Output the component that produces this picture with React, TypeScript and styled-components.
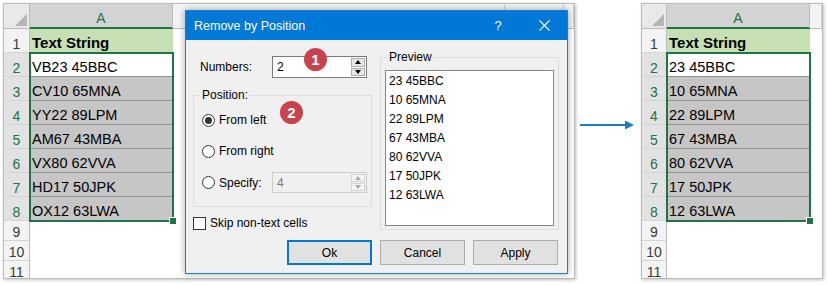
import React from "react";
import styled, { createGlobalStyle } from "styled-components";

/* tokens ---------------------------------------------------------- */
const GREEN = "#217346";
const HEAD_H = 25;
const ROW_H = 24;
const SEL_FILL = "#c6c6c6";

const GlobalStyle = createGlobalStyle`
  html, body { margin: 0; padding: 0; background: #fff; }
  body { font-family: "Liberation Sans", Arial, sans-serif; }
`;

/* page ------------------------------------------------------------ */
const Page = styled.div`
  width: 828px;
  height: 285px;
  box-sizing: border-box;
  padding: 3px 0 0 3px;
  display: flex;
  align-items: flex-start;
  overflow: hidden;
`;

const LeftPane = styled.div`
  position: relative;
  flex: none;
  width: 572px;
`;

const ArrowBox = styled.div`
  flex: none;
  width: 66px;
  padding-top: 116px;
  display: flex;
`;

/* spreadsheet ----------------------------------------------------- */
const Sheet = styled.div<{ $cols: string; $w: number }>`
  position: relative;
  flex: none;
  width: ${(p) => p.$w}px;
  height: 276px;
  box-sizing: border-box;
  border: 1px solid #bcbcbc;
  box-shadow: 1px 1px 3px rgba(0, 0, 0, 0.25);
  background: #fff;
  overflow: hidden;
  display: grid;
  grid-template-columns: ${(p) => p.$cols};
  grid-template-rows: ${HEAD_H}px repeat(8, ${ROW_H}px) repeat(3, 20px);
  align-content: start;
`;

const Corner = styled.div`
  background: #e9e9e9;
  border-right: 1px solid #bcbcbc;
  border-bottom: 1px solid #bcbcbc;
  display: flex;
  justify-content: flex-end;
  align-items: flex-end;
  padding: 0 2px 2px 0;
`;

const CornerMark = styled.div`
  width: 12px;
  height: 12px;
  background: #b5b5b5;
  clip-path: polygon(100% 0, 100% 100%, 0 100%);
`;

const ColHead = styled.div<{ $active?: boolean }>`
  background: ${(p) => (p.$active ? "#d3d3d3" : "#f3f3f3")};
  color: ${(p) => (p.$active ? GREEN : "#444")};
  border-right: 1px solid #bcbcbc;
  border-bottom: ${(p) => (p.$active ? `2px solid ${GREEN}` : "1px solid #bcbcbc")};
  font-size: 14px;
  display: flex;
  justify-content: center;
  align-items: flex-end;
  padding-bottom: 1px;
`;

const RowHead = styled.div<{ $active?: boolean }>`
  background: ${(p) => (p.$active ? "#e2e2e2" : "#f3f3f3")};
  color: ${(p) => (p.$active ? GREEN : "#3b3b3b")};
  border-right: 1px solid #bcbcbc;
  border-bottom: 1px solid #d4d4d4;
  font-size: 14px;
  display: flex;
  justify-content: center;
  align-items: flex-end;
  padding-bottom: 0;
`;

const Cell = styled.div<{ $fill?: string; $bold?: boolean; $line?: boolean }>`
  background: ${(p) => p.$fill ?? "#fff"};
  border-bottom: 1px solid ${(p) => (p.$line ? "#909090" : "transparent")};
  font-size: ${(p) => (p.$bold ? "15px" : "14.5px")};
  font-weight: ${(p) => (p.$bold ? 700 : 400)};
  color: #000;
  white-space: nowrap;
  overflow: hidden;
  display: flex;
  align-items: flex-end;
  padding: 0 0 1px 2px;
`;

const Blank = styled.div<{ $head?: boolean }>`
  background: ${(p) => (p.$head ? "#f3f3f3" : "#fff")};
  border-right: ${(p) => (p.$head ? "1px solid #d0d0d0" : "none")};
  border-bottom: ${(p) => (p.$head ? "1px solid #bcbcbc" : "none")};
`;

const Selection = styled.div<{ $left: number; $w: number }>`
  position: absolute;
  left: ${(p) => p.$left}px;
  top: ${HEAD_H + ROW_H - 1}px;
  width: ${(p) => p.$w}px;
  height: ${7 * ROW_H + 2}px;
  box-sizing: border-box;
  border: 2px solid ${GREEN};
  pointer-events: none;
`;

const FillHandle = styled.div`
  position: absolute;
  right: -5px;
  bottom: -5px;
  width: 6px;
  height: 6px;
  background: ${GREEN};
  border: 1px solid #fff;
`;

type SheetProps = { rows: string[]; cols: number[]; w: number };

function ExcelSheet({ rows, cols, w }: SheetProps) {
  const extra = cols.slice(2);
  const template = cols.map((c) => (c ? `${c}px` : "1fr")).join(" ");
  const total = 11;
  return (
    <Sheet $cols={template} $w={w}>
      <Corner>
        <CornerMark />
      </Corner>
      <ColHead $active>A</ColHead>
      {extra.map((_, i) => (
        <Blank key={`h${i}`} $head />
      ))}
      {Array.from({ length: total }, (_, r) => {
        const n = r + 1;
        const text = rows[r] ?? "";
        const sel = n >= 2 && n <= 8;
        return (
          <React.Fragment key={n}>
            <RowHead $active={sel}>{n}</RowHead>
            <Cell
              $bold={n === 1}
              $fill={n === 1 ? "#c6e0b4" : n >= 3 && n <= 8 ? SEL_FILL : "#fff"}
              $line={n >= 2 && n <= 7}
            >
              {text}
            </Cell>
            {extra.map((_, i) => (
              <Blank key={`c${n}-${i}`} />
            ))}
          </React.Fragment>
        );
      })}
      <Selection $left={cols[0] - 1} $w={cols[1] + 2}>
        <FillHandle />
      </Selection>
    </Sheet>
  );
}

/* dialog ---------------------------------------------------------- */
const Dialog = styled.div`
  position: absolute;
  left: 182px;
  top: 7px;
  width: 383px;
  height: 264px;
  box-sizing: border-box;
  border: 1px solid #1c7cd5;
  background: #f0f0f0;
  box-shadow: 0 0 7px rgba(0, 0, 0, 0.35);
  display: flex;
  flex-direction: column;
  font-size: 12px;
  color: #000;
`;

const TitleBar = styled.div`
  height: 29px;
  flex: none;
  background: #0078d7;
  color: #fff;
  display: flex;
  align-items: center;
  padding-left: 8px;
`;

const Title = styled.span`
  flex: 1;
  font-size: 12.5px;
`;

const TitleBtn = styled.div`
  width: 46px;
  height: 29px;
  display: flex;
  align-items: center;
  justify-content: center;
  font-size: 13px;
`;

const Body = styled.div`
  position: relative;
  flex: 1;
  padding: 10px 8px 0 7px;
  display: grid;
  grid-template-columns: 179px 179px;
  grid-template-rows: 180px auto;
  column-gap: 8px;
  row-gap: 10px;
`;

const LeftCol = styled.div`
  display: flex;
  flex-direction: column;
`;

const Row = styled.div<{ $h?: number }>`
  display: flex;
  align-items: center;
  height: ${(p) => p.$h ?? 20}px;
`;

const FieldLabel = styled.span<{ $w: number; $pad?: number }>`
  width: ${(p) => p.$w}px;
  padding-left: ${(p) => p.$pad ?? 0}px;
  box-sizing: border-box;
  flex: none;
`;

const SpinBox = styled.div<{ $disabled?: boolean }>`
  width: 95px;
  height: ${(p) => (p.$disabled ? 21 : 22)}px;
  box-sizing: border-box;
  border: 1px solid ${(p) => (p.$disabled ? "#cccccc" : "#7a7a7a")};
  background: ${(p) => (p.$disabled ? "#f0f0f0" : "#fff")};
  color: ${(p) => (p.$disabled ? "#7a7a7a" : "#000")};
  display: flex;
  align-items: center;
  padding: 1px;
  flex: none;
`;

const SpinValue = styled.span`
  flex: 1;
  padding-left: 3px;
`;

const SpinBtns = styled.div`
  width: 14px;
  align-self: stretch;
  display: flex;
  flex-direction: column;
  gap: 1px;
`;

const SpinBtn = styled.div<{ $disabled?: boolean }>`
  flex: 1;
  border: 1px solid ${(p) => (p.$disabled ? "#d4d4d4" : "#acacac")};
  background: ${(p) => (p.$disabled ? "#f4f4f4" : "#e6e6e6")};
  display: flex;
  align-items: center;
  justify-content: center;
`;

const Tri = styled.div<{ $down?: boolean; $disabled?: boolean }>`
  width: 0;
  height: 0;
  border-left: 3.5px solid transparent;
  border-right: 3.5px solid transparent;
  ${(p) =>
    p.$down
      ? `border-top: 4px solid ${p.$disabled ? "#a8a8a8" : "#000"};`
      : `border-bottom: 4px solid ${p.$disabled ? "#a8a8a8" : "#000"};`}
`;

const Group = styled.fieldset<{ $h: number; $mt?: number }>`
  margin: ${(p) => p.$mt ?? 0}px 0 0 0;
  min-width: 0;
  height: ${(p) => p.$h}px;
  box-sizing: border-box;
  border: 1px solid #dcdcdc;
  padding: 0;
`;

const Legend = styled.legend`
  margin-left: 6px;
  padding: 0 2px;
  font-size: 12px;
  line-height: 14px;
`;

const RadioList = styled.div`
  padding: 8px 0 0 8px;
  display: flex;
  flex-direction: column;
  gap: 11px;
`;

const Radio = styled.div<{ $checked?: boolean }>`
  width: 13px;
  height: 13px;
  box-sizing: border-box;
  border-radius: 50%;
  border: 1px solid #333;
  background: #fff;
  flex: none;
  margin-right: 4px;
  display: flex;
  align-items: center;
  justify-content: center;
  &::after {
    content: "";
    width: 7px;
    height: 7px;
    border-radius: 50%;
    background: ${(p) => (p.$checked ? "#333" : "transparent")};
  }
`;

const CheckRow = styled.div`
  margin-top: 9px;
  display: flex;
  align-items: center;
  gap: 4px;
`;

const CheckBox = styled.div`
  width: 13px;
  height: 13px;
  box-sizing: border-box;
  border: 1px solid #333;
  background: #fff;
`;

const ListBox = styled.div`
  margin: 6px 4px 0 4px;
  height: 156px;
  box-sizing: border-box;
  border: 1px solid #828790;
  background: #fff;
  padding: 1px 0 0 3px;
`;

const ListItem = styled.div`
  line-height: 19px;
  white-space: nowrap;
`;

const Buttons = styled.div`
  grid-column: 1 / -1;
  display: flex;
  justify-content: flex-end;
  gap: 8px;
  padding-right: 1px;
`;

const Button = styled.div<{ $focus?: boolean }>`
  width: 85px;
  height: 25px;
  box-sizing: border-box;
  border: ${(p) => (p.$focus ? "2px solid #0078d7" : "1px solid #adadad")};
  background: #e1e1e1;
  display: flex;
  align-items: center;
  justify-content: center;
`;

const Badge = styled.div<{ $x: number; $y: number }>`
  position: absolute;
  left: ${(p) => p.$x}px;
  top: ${(p) => p.$y}px;
  width: 23px;
  height: 23px;
  border-radius: 50%;
  background: #c9434e;
  color: #fff;
  font-weight: 700;
  font-size: 15px;
  display: flex;
  align-items: center;
  justify-content: center;
`;

function Spinner({ value, disabled }: { value: string; disabled?: boolean }) {
  return (
    <SpinBox $disabled={disabled}>
      <SpinValue>{value}</SpinValue>
      <SpinBtns>
        <SpinBtn $disabled={disabled}>
          <Tri $disabled={disabled} />
        </SpinBtn>
        <SpinBtn $disabled={disabled}>
          <Tri $down $disabled={disabled} />
        </SpinBtn>
      </SpinBtns>
    </SpinBox>
  );
}

const before = [
  "Text String",
  "VB23 45BBC",
  "CV10 65MNA",
  "YY22 89LPM",
  "AM67 43MBA",
  "VX80 62VVA",
  "HD17 50JPK",
  "OX12 63LWA",
];

const after = [
  "Text String",
  "23 45BBC",
  "10 65MNA",
  "22 89LPM",
  "67 43MBA",
  "80 62VVA",
  "17 50JPK",
  "12 63LWA",
];

export default function App() {
  return (
    <>
      <GlobalStyle />
      <Page>
        <LeftPane>
          <ExcelSheet rows={before} cols={[26, 143, 332, 59, 0]} w={572} />
          <Dialog>
            <TitleBar>
              <Title>Remove by Position</Title>
              <TitleBtn>?</TitleBtn>
              <TitleBtn>
                <svg width="11" height="11" viewBox="0 0 11 11">
                  <path d="M0.5 0.5 L10.5 10.5 M10.5 0.5 L0.5 10.5" stroke="#fff" strokeWidth="1.1" />
                </svg>
              </TitleBtn>
            </TitleBar>
            <Body>
              <LeftCol>
                <Row $h={22} style={{ marginTop: 6 }}>
                  <FieldLabel $w={79} $pad={7}>Numbers:</FieldLabel>
                  <Spinner value="2" />
                </Row>
                <Group $h={120} $mt={10}>
                  <Legend>Position:</Legend>
                  <RadioList>
                    <Row>
                      <Radio $checked />
                      <span>From left</span>
                    </Row>
                    <Row>
                      <Radio />
                      <span>From right</span>
                    </Row>
                    <Row $h={21}>
                      <Radio />
                      <FieldLabel $w={53}>Specify:</FieldLabel>
                      <Spinner value="4" disabled />
                    </Row>
                  </RadioList>
                </Group>
                <CheckRow>
                  <CheckBox />
                  <span>Skip non-text cells</span>
                </CheckRow>
              </LeftCol>
              <Group $h={180}>
                <Legend>Preview</Legend>
                <ListBox>
                  {after.slice(1).map((t) => (
                    <ListItem key={t}>{t}</ListItem>
                  ))}
                </ListBox>
              </Group>
              <Buttons>
                <Button $focus>Ok</Button>
                <Button>Cancel</Button>
                <Button>Apply</Button>
              </Buttons>
              <Badge $x={118} $y={8}>1</Badge>
              <Badge $x={94} $y={61}>2</Badge>
            </Body>
          </Dialog>
        </LeftPane>
        <ArrowBox>
          <svg width="66" height="12" viewBox="0 0 66 12">
            <line x1="5" y1="6" x2="52" y2="6" stroke="#1f7bc8" strokeWidth="2" />
            <polygon points="50,1.5 59,6 50,10.5" fill="#1f7bc8" />
          </svg>
        </ArrowBox>
        <ExcelSheet rows={after} cols={[25, 143, 0]} w={182} />
      </Page>
    </>
  );
}
